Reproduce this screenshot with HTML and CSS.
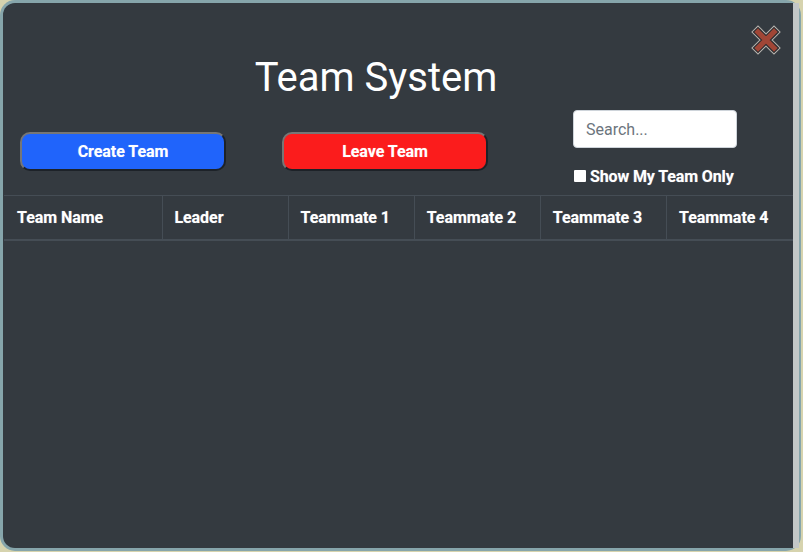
FILE: index.html
```html
<!DOCTYPE html>
<html lang="en">
<head>
<meta charset="utf-8">
<title>Team System</title>
<link rel="stylesheet" href="styles.css">
</head>
<body>
<div class="window">
  <div class="panel">
    <div class="content">
      <button class="close" aria-label="Close">
        <svg viewBox="0 0 30 30" width="30" height="30">
          <path class="x-out" d="M7 7 L23 23 M23 7 L7 23"/>
          <path class="x-mid" d="M7 7 L23 23 M23 7 L7 23"/>
          <path class="x-in" d="M7 7 L23 23 M23 7 L7 23"/>
        </svg>
      </button>
      <h1 class="title">Team System</h1>
      <div class="toolbar">
        <button class="btn btn-blue">Create Team</button>
        <button class="btn btn-red">Leave Team</button>
        <div class="filters">
          <input class="search" type="text" placeholder="Search...">
          <label class="only"><span class="check"></span>Show My Team Only</label>
        </div>
      </div>
      <table class="teams">
        <thead>
          <tr>
            <th class="first">Team Name</th>
            <th>Leader</th>
            <th>Teammate 1</th>
            <th>Teammate 2</th>
            <th>Teammate 3</th>
            <th>Teammate 4</th>
          </tr>
        </thead>
      </table>
    </div>
    <div class="scrollbar"></div>
  </div>
</div>
</body>
</html>
```
FILE: styles.css
```css
* { box-sizing: border-box; }
html, body { margin: 0; height: 100%; }
body {
  width: 803px;
  height: 552px;
  overflow: hidden;
  background: #d6d3ae;
  font-family: Roboto, "Liberation Sans", sans-serif;
}
.window {
  width: 801px;
  height: 551px;
  background: #86a5ab;
  border-radius: 15px;
  padding: 3px 2px 3px 3px;
}
.panel {
  display: flex;
  height: 100%;
  background: #343a40;
  border-radius: 12px 0 0 12px;
  overflow: hidden;
}
.content {
  position: relative;
  flex: 1;
  padding: 0 0 0 1px;
  color: #fff;
}
.scrollbar {
  width: 6px;
  background: #c3c7c7;
}
.close {
  position: absolute;
  top: 22px;
  left: 748px;
  width: 30px;
  height: 30px;
  padding: 0;
  border: 0;
  background: none;
}
.close svg { display: block; }
.x-out, .x-mid, .x-in { fill: none; stroke-linecap: square; }
.x-out { stroke: #b4b1ac; stroke-width: 9.6; }
.x-mid { stroke: #2b2c30; stroke-width: 7.6; }
.x-in { stroke: #a04636; stroke-width: 5.2; }
.title {
  margin: 0;
  padding-top: 48px;
  height: 107px;
  padding-right: 45px;
  text-align: center;
  font-size: 40px;
  font-weight: 400;
  line-height: 54px;
}
.toolbar {
  display: flex;
  height: 85px;
  padding-left: 16px;
}
.btn {
  width: 206px;
  height: 39px;
  margin-top: 22px;
  padding: 0 0 1px;
  font-family: inherit;
  font-size: 16px;
  font-weight: 700;
  letter-spacing: -0.05px;
  color: #fff;
  border-radius: 10px;
  border: 2px solid;
  border-color: #767676 #1d2228 #1d2228 #767676;
  text-shadow: 0 0 1px rgba(255, 255, 255, 0.45);
}
.btn-blue { background: #2064fb; }
.btn-red { background: #fb1c1c; margin-left: 56px; }
.filters {
  display: flex;
  flex-direction: column;
  margin-left: 85px;
}
.search {
  width: 164px;
  height: 38px;
  padding: 0 12px;
  font-family: inherit;
  font-size: 16px;
  color: #495057;
  background: #fff;
  border: 1px solid #ced4da;
  border-radius: 4px;
}
.search::placeholder { color: #6c757d; opacity: 1; }
.only {
  display: flex;
  align-items: center;
  margin-top: 19px;
  margin-left: 1px;
  font-size: 16px;
  font-weight: 700;
  letter-spacing: -0.12px;
  line-height: 20px;
  text-shadow: 0 0 1px rgba(255, 255, 255, 0.45);
}
.check {
  width: 12px;
  height: 12px;
  margin: -2px 4px 0 0;
  background: #fff;
  border-radius: 1px;
}
.teams {
  width: 789px;
  table-layout: fixed;
  border-collapse: collapse;
}
.teams th {
  width: 126px;
  height: 44px;
  padding: 0 12px 0 11.7px;
  text-align: left;
  font-size: 16px;
  font-weight: 700;
  letter-spacing: -0.05px;
  border: 1px solid #454d55;
  border-bottom-width: 2px;
  text-shadow: 0 0 1px rgba(255, 255, 255, 0.45);
}
.teams th:first-child { border-left: 0; padding-left: 13px; }
.teams th:last-child { border-right: 0; }
.teams .first { width: 158px; }
```
